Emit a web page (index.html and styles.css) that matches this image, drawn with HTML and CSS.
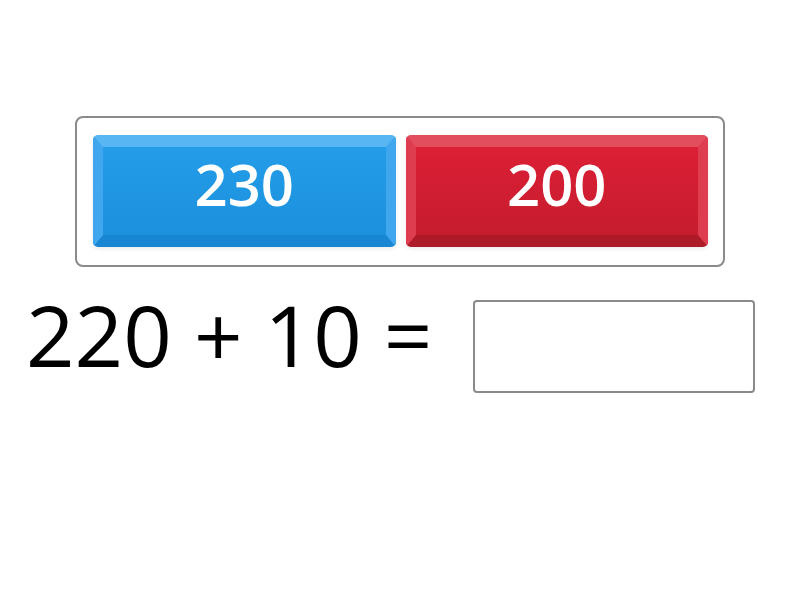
FILE: index.html
```html
<!DOCTYPE html>
<html lang="en">
<head>
<meta charset="utf-8">
<title>220 + 10</title>
<link rel="stylesheet" href="styles.css">
</head>
<body>
<main class="quiz">
  <div class="choices">
    <button class="choice choice-blue">230</button>
    <button class="choice choice-red">200</button>
  </div>
  <div class="question">
    <span class="sum">220 + 10 =</span>
    <div class="answer"></div>
  </div>
</main>
</body>
</html>
```

FILE: styles.css
```css
html, body {
  margin: 0;
  padding: 0;
  background: #ffffff;
}

body {
  font-family: "Open Sans", "Liberation Sans", sans-serif;
  width: 800px;
  height: 600px;
  overflow: hidden;
}

.quiz {
  display: flex;
  flex-direction: column;
  padding-top: 116px;
}

/* tray that holds the answer tiles */
.choices {
  align-self: center;
  display: flex;
  gap: 10px;
  width: 650px;
  box-sizing: border-box;
  padding: 17px 15px 18px 16px;
  border: 2px solid #8a8a8a;
  border-radius: 8px;
}

/* bevelled key-cap tiles */
.choice {
  flex: 1;
  height: 112px;
  box-sizing: border-box;
  border-style: solid;
  border-width: 12px 10px 12px 10px;
  border-radius: 5px;
  padding: 0 0 14px 0;
  margin: 0;
  color: #ffffff;
  font-family: "Open Sans", "Liberation Sans", sans-serif;
  font-weight: 600;
  font-size: 58px;
  line-height: 1;
  display: flex;
  align-items: center;
  justify-content: center;
  box-shadow: 0 2px 4px rgba(0, 0, 0, 0.08);
}

.choice-blue {
  border-color: #58b6f3 #40a7ee #1986d3 #40a7ee;
  background: linear-gradient(#249ce8, #1c91de);
}

.choice-red {
  border-color: #e34e5e #de3c4f #ad1a28 #de3c4f;
  background: linear-gradient(#dc1f35, #c61c2e);
}

.question {
  display: flex;
  align-items: flex-start;
  margin-top: 33px;
  padding-left: 26px;
}

.sum {
  font-size: 85px;
  line-height: 1;
  color: #000000;
  white-space: pre;
  margin-top: -8px;
}

.answer {
  width: 282px;
  height: 93px;
  box-sizing: border-box;
  border: 2px solid #8a8a8a;
  border-radius: 4px;
  margin-left: 41px;
}
```
